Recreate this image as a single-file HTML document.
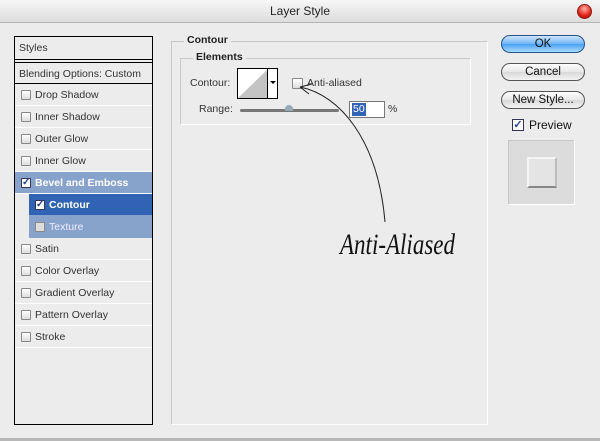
<!DOCTYPE html>
<html><head><meta charset="utf-8"><style>
*{margin:0;padding:0;box-sizing:border-box}
body{width:600px;height:441px;overflow:hidden;background:#ececec;font-family:"Liberation Sans",sans-serif;font-size:10.5px;color:#222;position:relative}
.a{position:absolute}
.title{left:0;top:0;width:600px;height:23px;background:linear-gradient(#f7f7f7,#dcdcdc);border-bottom:1px solid #b5b5b5;text-align:center;line-height:23px;font-size:12px;color:#222}
.close{left:577px;top:4px;width:15px;height:15px;border-radius:50%;background:radial-gradient(circle at 50% 30%,#ffb0a8,#e02418 60%,#a00 100%);border:1px solid #8a1a12}
.panel{left:14px;top:36px;width:139px;height:389px;border:1px solid #000;background:#ececec}
.row{position:absolute;left:0;width:137px;height:22px;line-height:22px;border-bottom:1px solid #fff;padding-left:20px;color:#333}
.cb{position:absolute;left:6px;top:6px;width:10px;height:10px;border:1px solid #888;background:linear-gradient(#fff,#ddd);border-radius:1px;font-size:10px;line-height:8px;text-align:center;color:#22448a;font-weight:bold}
.grp{border:1px solid #c8c8c8;border-right-color:#fff;border-bottom-color:#fff}
.btn{left:501px;width:84px;height:18px;border-radius:9px;border:1px solid #555;background:linear-gradient(#fff,#e6e6e6 50%,#d8d8d8 51%,#f4f4f4);text-align:center;line-height:16px;font-size:11.5px;color:#111}
</style></head><body>
<div class="a title">Layer Style</div>
<div class="a close"></div>
<div class="a" style="left:0;top:438px;width:600px;height:3px;background:#b8b8b8"></div>

<div class="a panel">
 <div class="row" style="top:0;height:23px;padding-left:4px;border-bottom:1px solid #000">Styles</div>
 <div class="row" style="top:25px;height:22px;padding-left:4px;border-top:1px solid #000;border-bottom:1px solid #000">Blending Options: Custom</div>
 <div class="row" style="top:47px"><span class="cb"></span>Drop Shadow</div>
 <div class="row" style="top:69px"><span class="cb"></span>Inner Shadow</div>
 <div class="row" style="top:91px"><span class="cb"></span>Outer Glow</div>
 <div class="row" style="top:113px"><span class="cb"></span>Inner Glow</div>
 <div class="row" style="top:135px;background:#87a2cb;color:#fff;font-weight:bold"><span class="cb" style="background:#fff;border-color:#335">✓</span>Bevel and Emboss</div>
 <div class="row" style="top:157px;left:14px;width:123px;background:#3163b5;color:#fff;font-weight:bold;border-bottom:1px solid #87a2cb"><span class="cb" style="background:#fff;border-color:#335">✓</span>Contour</div>
 <div class="row" style="top:179px;background:#87a2cb;border-bottom:none"><div style="position:absolute;left:0;top:0;width:14px;height:22px;background:#ececec"></div><div style="position:absolute;left:14px;top:0;width:123px;height:22px;padding-left:20px;color:#eef"><span class="cb" style="background:#ddd"></span>Texture</div></div>
 <div class="row" style="top:201px"><span class="cb"></span>Satin</div>
 <div class="row" style="top:223px"><span class="cb"></span>Color Overlay</div>
 <div class="row" style="top:245px"><span class="cb"></span>Gradient Overlay</div>
 <div class="row" style="top:267px"><span class="cb"></span>Pattern Overlay</div>
 <div class="row" style="top:289px"><span class="cb"></span>Stroke</div>
</div>

<div class="a grp" style="left:171px;top:41px;width:317px;height:384px"></div>
<div class="a" style="left:184px;top:34px;background:#ececec;padding:0 3px;font-weight:bold">Contour</div>
<div class="a grp" style="left:180px;top:58px;width:291px;height:67px"></div>
<div class="a" style="left:193px;top:51px;background:#ececec;padding:0 3px;font-weight:bold">Elements</div>
<div class="a" style="left:190px;top:77px;color:#333">Contour:</div>
<div class="a" style="left:237px;top:68px;width:41px;height:31px;border:1px solid #000;background:#fff;overflow:hidden">
 <svg width="30" height="29" style="position:absolute;left:0;top:0"><polygon points="0,29 30,0 30,29" fill="#c4c4c4"/></svg>
 <div style="position:absolute;left:29px;top:0;width:1px;height:29px;background:#000"></div>
 <div style="position:absolute;left:32px;top:12px;width:0;height:0;border-left:3px solid transparent;border-right:3px solid transparent;border-top:3px solid #000"></div>
</div>
<div class="a cb" style="left:292px;top:78px;width:11px;height:11px"></div>
<div class="a" style="left:307px;top:77px;color:#333">Anti-aliased</div>
<div class="a" style="left:199px;top:103px;color:#333">Range:</div>
<div class="a" style="left:240px;top:109px;width:99px;height:3px;background:#777;border-radius:2px"></div>
<div class="a" style="left:285px;top:105px;width:8px;height:6px;background:#9ab;border-radius:4px 4px 1px 1px"></div>
<div class="a" style="left:349px;top:101px;width:36px;height:17px;border:1px solid #777;background:#fff"><span style="position:absolute;left:2px;top:1px;background:#3163b5;color:#fff;padding:0 1px;line-height:13px">50</span></div>
<div class="a" style="left:388px;top:103px;color:#333">%</div>

<svg class="a" style="left:0;top:0" width="600" height="441">
 <path d="M300,87 C340,95 378,140 385,222" fill="none" stroke="#222" stroke-width="1"/>
 <path d="M300,87 L312,84 M300,87 L309,94" fill="none" stroke="#222" stroke-width="1"/>
 <text x="340" y="254" font-family="Liberation Serif, serif" font-style="italic" font-size="30" fill="#111" textLength="115" lengthAdjust="spacingAndGlyphs">Anti-Aliased</text>
</svg>

<div class="a btn" style="top:35px;background:linear-gradient(#cfe6ff,#6eb3f5 50%,#4aa0f0 51%,#a8dcff);border-color:#24528a">OK</div>
<div class="a btn" style="top:63px">Cancel</div>
<div class="a btn" style="top:91px">New Style...</div>
<div class="a" style="left:512px;top:119px;width:12px;height:12px;border:1px solid #335;background:#fff;color:#22448a;font-size:11px;line-height:10px;text-align:center;font-weight:bold">✓</div>
<div class="a" style="left:529px;top:118px;font-size:12px;color:#111">Preview</div>
<div class="a" style="left:508px;top:140px;width:67px;height:65px;background:#dcdcdc;border:1px solid #fff;border-left-color:#c8c8c8;border-top-color:#c8c8c8"></div>
<div class="a" style="left:527px;top:157px;width:30px;height:31px;background:#e4e4e4;border:2px solid #f4f4f4;border-right-color:#bbb;border-bottom-color:#888"></div>
</body></html>
